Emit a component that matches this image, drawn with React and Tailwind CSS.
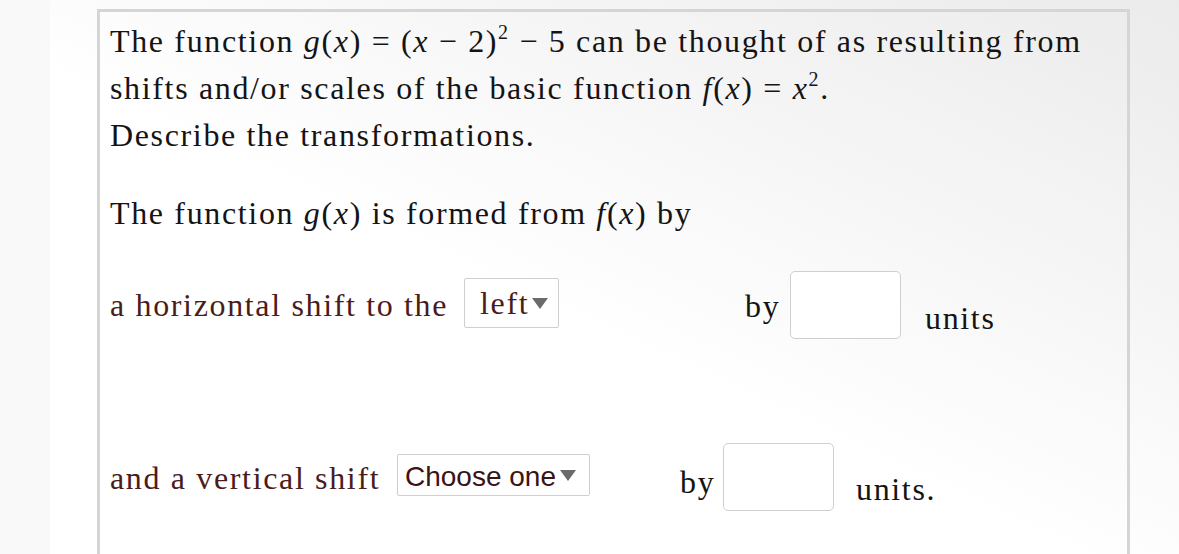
import React from "react";

const Tri = () => (
  <svg width="16" height="11" viewBox="0 0 16 11" className="inline-block">
    <polygon points="0,0 16,0 8,11" fill="#6b6b6b" />
  </svg>
);

const V = ({ children }) => <i className="italic">{children}</i>;

export default function App() {
  return (
    <div
      className="w-[1179px] h-[554px] overflow-hidden flex bg-[linear-gradient(to_top_right,#ffffff_45%,#ebebeb)] text-[#141414] whitespace-nowrap"
      style={{ fontFamily: '"Liberation Serif", "Times New Roman", serif' }}
    >
      <div className="w-[50px] h-full bg-[#f9f9f9] shrink-0" />
      <div className="flex-1 pt-[9px] pl-[47px] pr-[49px]">
        <div className="h-[600px] border-[3px] border-b-0 border-[#d5d5d5] pl-[10px] pt-[6px] text-[32px] tracking-[1.65px] leading-[47px]">
          <div>
            The function <V>g</V>(<V>x</V>) = (<V>x</V> − 2)
            <sup className="text-[20px] relative -top-[13px] align-baseline">2</sup> − 5 can be thought of as resulting from
          </div>
          <div>
            shifts and/or scales of the basic function <V>f</V>(<V>x</V>) = <V>x</V>
            <sup className="text-[20px] relative -top-[13px] align-baseline">2</sup>.
          </div>
          <div>Describe the transformations.</div>
          <div className="mt-[31px]">
            The function <V>g</V>(<V>x</V>) is formed from <V>f</V>(<V>x</V>) by
          </div>

          {/* Row 1 */}
          <div className="flex items-start mt-[34px] h-[70px] leading-[40px]">
            <span className="w-[354px] mt-[14px] text-[#4a1c1c]">a horizontal shift to the</span>
            <span className="mt-[7px] w-[95px] h-[50px] border border-[#cfcfcf] rounded-[2px] bg-white flex items-center pl-[15px] text-[#4a1c1c] gap-[3px]">
              left
              <Tri />
            </span>
            <span className="ml-[186px] w-[45px] mt-[15px]">by</span>
            <span className="w-[111px] h-[68px] border border-[#cfcfcf] rounded-[5px] bg-white" />
            <span className="ml-[24px] mt-[27px]">units</span>
          </div>

          {/* Row 2 */}
          <div className="flex items-start mt-[102px] h-[70px] leading-[40px]">
            <span className="w-[287px] mt-[15px] text-[#4a1c1c]">and a vertical shift</span>
            <span
              className="mt-[11px] w-[193px] h-[42px] border border-[#cfcfcf] rounded-[2px] bg-white flex items-center pl-[7px] pt-[3px] gap-[4px] text-[#3a1414] text-[28px] tracking-normal"
              style={{ fontFamily: '"Liberation Sans", Arial, sans-serif' }}
            >
              Choose one
              <span className="-mt-[3px] flex">
                <Tri />
              </span>
            </span>
            <span className="ml-[90px] w-[43px] mt-[19px]">by</span>
            <span className="w-[111px] h-[68px] border border-[#cfcfcf] rounded-[5px] bg-white" />
            <span className="ml-[22px] mt-[26px]">units.</span>
          </div>
        </div>
      </div>
    </div>
  );
}
